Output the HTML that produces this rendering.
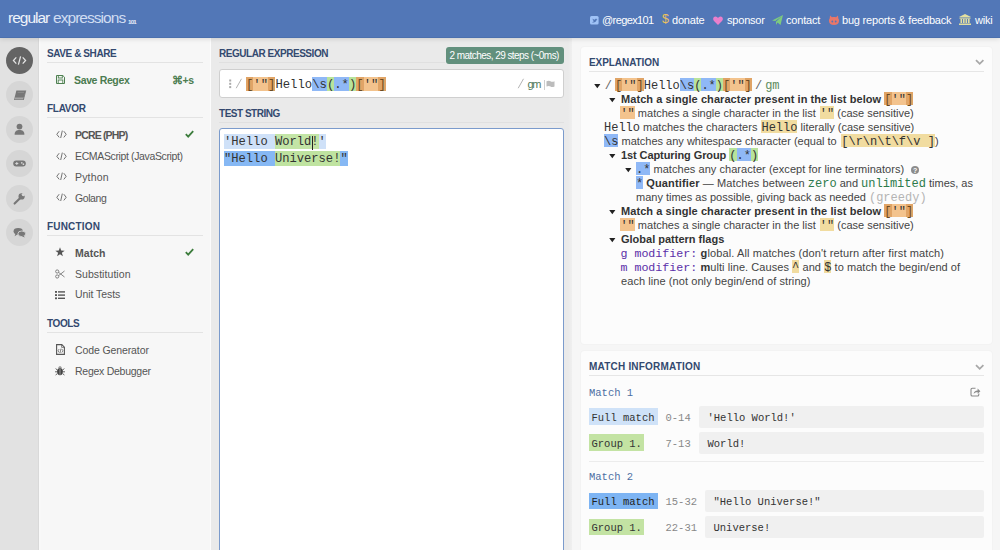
<!DOCTYPE html>
<html><head><meta charset="utf-8">
<style>
*{margin:0;padding:0;box-sizing:border-box}
html,body{width:1000px;height:550px;overflow:hidden;background:#f5f5f5;font-family:"Liberation Sans",sans-serif;color:#444}
.a{position:absolute;white-space:nowrap}
#hdr{position:absolute;left:0;top:0;width:1000px;height:38px;background:#5277b7;border-bottom:1px solid #4b70ae;box-shadow:0 1px 5px rgba(0,0,0,0.13);z-index:5}
#ibar{position:absolute;left:0;top:38px;width:38px;height:512px;background:#e2e2e2}
#side{position:absolute;left:38px;top:38px;width:172px;height:512px;background:linear-gradient(to right,#d9d9d9 0,#d9d9d9 1px,#fbfbfb 1px,#f7f7f7 3px)}
#center{position:absolute;left:210px;top:38px;width:362px;height:512px;background:linear-gradient(to right,#fcfcfc 0,#fcfcfc 1px,#eaeaea 1px,#eaeaea 358px,#efefef 362px)}
#right{position:absolute;left:572px;top:38px;width:428px;height:512px;background:#f6f6f6}
.circ{position:absolute;left:6px;width:27px;height:27px;border-radius:50%;background:#d6d6d6}
.circ svg{position:absolute;left:0;top:0}
.sh{font-weight:bold;font-size:10px;line-height:12px;color:#33496f;letter-spacing:-0.4px}
.hr{position:absolute;height:1px;background:#e3e3e3}
.si{font-size:10.5px;line-height:12px;color:#555;letter-spacing:-0.3px}
.mono{font-family:"Liberation Mono",monospace}
.hl{font-size:11px;line-height:12px;color:#fff;letter-spacing:-0.2px}
.ex{font-size:11px;line-height:16px;color:#444}
.exb{font-weight:bold}
.cc{background:#f3c38d}
.ccb{background:#e0a466;color:#6b4a22}
.blu{background:#8fb8f6}
.grn{background:#b8e39a}
.yel{background:#f1dca0}
.m{font-family:"Liberation Mono",monospace;font-size:12px;color:#333}
.hx{display:inline-block;height:12.7px;line-height:17.2px;vertical-align:baseline}
.ex b{font-weight:bold;color:#333}
.gr{color:#666}
.flg{color:#5b8a5b}
.zg{color:#2c7a4b}
.gy{color:#b4b4b4}
.pu{color:#5a2ea8;font-weight:normal;font-size:11.67px;letter-spacing:0}
.qm{display:inline-block;width:8.5px;height:8.5px;margin-left:3.5px;border-radius:50%;background:#8c8c8c;color:#fff;font-size:7px;line-height:9px;text-align:center;font-weight:bold;vertical-align:0.5px;letter-spacing:0}
.mi{font-family:"Liberation Mono",monospace;font-size:10.5px;line-height:12px}
.hr1{display:inline-block;height:14px;line-height:17.28px;vertical-align:baseline}
.ht{display:inline-block;height:15px;line-height:16.74px;vertical-align:top;white-space:pre}
</style></head><body>
<div id="hdr">
  <div class="a" style="left:8px;top:9px;font-size:15.5px;line-height:18px;color:#eef3fa;letter-spacing:-1px">regular</div>
  <div class="a" style="left:53px;top:9px;font-size:15.5px;line-height:18px;color:#d0ddf2;letter-spacing:-0.95px">expressions</div>
  <div class="a" style="left:128px;top:17.9px;font-size:6.2px;line-height:8px;color:#e6edf8;letter-spacing:-0.8px;font-weight:bold">101</div>
  <!-- links -->
  <svg class="a" style="left:590px;top:16px" width="9" height="9"><rect x="0" y="0" width="8.6" height="8.6" rx="1.5" fill="#9fc2f6"/><path d="M2 6.2c1.8 0.9 4.3 0.2 4.8-2.6l0.8-0.6-0.8 0.1c-0.5-0.8-1.8-0.5-1.8 0.6-1.2 0-2-0.6-2.6-1.2 0 0.6 0.2 1.2 0.7 1.5-0.6 0.1 0.3 0.9 0.9 1.1-0.5 0.5-1.2 0.8-2 1.1z" fill="#5277b7"/></svg>
  <div class="a hl" style="left:602px;top:13.7px;letter-spacing:-0.6px">@regex101</div>
  <div class="a" style="left:662px;top:12px;font-size:12.5px;line-height:14px;color:#ecc15e">$</div>
  <div class="a hl" style="left:672px;top:13.7px">donate</div>
  <svg class="a" style="left:713px;top:16px" width="10" height="9"><path d="M5 9L1 5C-0.5 3.5 0 0.5 2.5 0.5 3.7 0.5 4.5 1.3 5 2 5.5 1.3 6.3 0.5 7.5 0.5 10 0.5 10.5 3.5 9 5z" fill="#ea7fcc"/></svg>
  <div class="a hl" style="left:727px;top:13.7px">sponsor</div>
  <svg class="a" style="left:772px;top:15px" width="11" height="10"><path d="M0 5.5L11 0 8.5 10 5.5 7.5 4 10 4 6.8 9.5 1.5 3.3 6z" fill="#7ecb7e"/></svg>
  <div class="a hl" style="left:786px;top:13.7px">contact</div>
  <svg class="a" style="left:829px;top:15px" width="10" height="10"><path d="M1 0.5L3 2.2C4.2 1.8 5.8 1.8 7 2.2L9 0.5 9.3 3.5C10 4.3 10 5 10 6 10 8.5 8 10 5 10 2 10 0 8.5 0 6 0 5 0 4.3 0.7 3.5z" fill="#e8776a"/><circle cx="3.3" cy="6.5" r="0.9" fill="#5277b7"/><circle cx="6.7" cy="6.5" r="0.9" fill="#5277b7"/></svg>
  <div class="a hl" style="left:842px;top:13.7px">bug reports &amp; feedback</div>
  <svg class="a" style="left:959px;top:14px" width="12" height="11"><path d="M6 0L12 3 0 3z" fill="#e2dfa0"/><rect x="0.5" y="3.5" width="11" height="1.2" fill="#e2dfa0"/><rect x="1.5" y="5" width="1.6" height="4" fill="#e2dfa0"/><rect x="4" y="5" width="1.6" height="4" fill="#e2dfa0"/><rect x="6.5" y="5" width="1.6" height="4" fill="#e2dfa0"/><rect x="9" y="5" width="1.6" height="4" fill="#e2dfa0"/><rect x="0" y="9.5" width="12" height="1.5" fill="#e2dfa0"/></svg>
  <div class="a hl" style="left:975px;top:13.7px">wiki</div>
</div>

<div id="ibar">
  <div class="circ" style="top:8.5px;background:#646464"><svg width="27" height="27"><path d="M10.3 10.3L7.4 13.5 10.3 16.7M16.7 10.3L19.6 13.5 16.7 16.7M14.6 9.3L12.4 17.7" stroke="#e6e6e6" stroke-width="1.25" fill="none"/></svg></div>
  <div class="circ" style="top:43px"><svg width="27" height="27"><path d="M10.4 9.6H19.8L18 16.6H8.6z" fill="#777"/><path d="M8.6 16.6H18L17.4 19H8z" fill="#777"/><path d="M8.9 17.8H17.1" stroke="#dadada" stroke-width="0.7"/><path d="M11.6 11.4H18" stroke="#9a9a9a" stroke-width="0.6"/><path d="M19.8 9.6L18 16.6 17.4 19" stroke="#777" stroke-width="0.8" fill="none"/></svg></div>
  <div class="circ" style="top:78px"><svg width="27" height="27"><circle cx="13.5" cy="10.6" r="2.9" fill="#777"/><path d="M8.6 18.8C8.6 15.2 10.6 14.1 13.5 14.1S18.4 15.2 18.4 18.8z" fill="#777"/></svg></div>
  <div class="circ" style="top:112px"><svg width="27" height="27"><rect x="7.2" y="10.6" width="12.6" height="5.8" rx="2.9" fill="#777"/><path d="M9.3 13.5H12.3M10.8 12V15" stroke="#d6d6d6" stroke-width="1"/><circle cx="15.8" cy="12.8" r="0.85" fill="#d6d6d6"/><circle cx="17.4" cy="14.2" r="0.85" fill="#d6d6d6"/></svg></div>
  <div class="circ" style="top:146.5px"><svg width="27" height="27"><path d="M8.6 18.6L14 13.2" stroke="#777" stroke-width="2.1" stroke-linecap="round"/><circle cx="15.6" cy="11.4" r="3.1" fill="#777"/><circle cx="17.4" cy="9.6" r="1.7" fill="#d6d6d6"/></svg></div>
  <div class="circ" style="top:181px"><svg width="27" height="27"><ellipse cx="12.2" cy="12.3" rx="4.6" ry="3.3" fill="#777"/><path d="M9.5 14.6L8.6 17.2 11.6 15.3z" fill="#777"/><ellipse cx="15.8" cy="14.8" rx="3.9" ry="2.8" fill="#777" stroke="#d6d6d6" stroke-width="0.9"/><path d="M17.6 16.6L18.8 18.6 15.8 17.2z" fill="#777"/></svg></div>
</div>

<div id="side">
  <div class="a sh" style="left:9px;top:9.6px;letter-spacing:-0.418px">SAVE &amp; SHARE</div>
  <div class="hr" style="left:9px;top:24px;width:156px"></div>
  <svg class="a" style="left:18px;top:37px" width="9" height="9"><path d="M0.5 0.5H6.8L8.5 2.2V8.5H0.5z" fill="none" stroke="#4e8050" stroke-width="1"/><rect x="2.3" y="0.5" width="4" height="2.5" fill="none" stroke="#4e8050" stroke-width="0.9"/><rect x="2.2" y="5" width="4.6" height="3.5" fill="none" stroke="#4e8050" stroke-width="0.9"/></svg>
  <div class="a si" style="left:36px;top:36.07px;font-weight:bold;color:#4b7c50;letter-spacing:-0.356px">Save Regex</div>
  <div class="a si" style="left:134px;top:35.9px;font-weight:bold;color:#4b7c50;letter-spacing:-0.4px">&#8984;+s</div>

  <div class="a sh" style="left:9px;top:65.4px;letter-spacing:-0.28px">FLAVOR</div>
  <div class="hr" style="left:9px;top:79px;width:156px"></div>
  <svg class="a" style="left:17.5px;top:92.3px" width="11" height="9"><path d="M3.2 1.2L0.8 4.3 3.2 7.4M7.8 1.2L10.2 4.3 7.8 7.4M6.3 0.6L4.7 8" stroke="#6a6a6a" stroke-width="0.95" fill="none"/></svg>
  <div class="a si" style="left:37px;top:90.77px;font-weight:bold;letter-spacing:-0.833px">PCRE (PHP)</div>
  <svg class="a" style="left:147px;top:92px" width="9" height="8"><path d="M0.8 4.2L3.2 6.6 8.2 1.2" stroke="#3d7d3d" stroke-width="1.8" fill="none"/></svg>
  <svg class="a" style="left:17.5px;top:113.5px" width="11" height="9"><path d="M3.2 1.2L0.8 4.3 3.2 7.4M7.8 1.2L10.2 4.3 7.8 7.4M6.3 0.6L4.7 8" stroke="#6a6a6a" stroke-width="0.95" fill="none"/></svg>
  <div class="a si" style="left:37px;top:111.97px;letter-spacing:-0.364px">ECMAScript (JavaScript)</div>
  <svg class="a" style="left:17.5px;top:134.3px" width="11" height="9"><path d="M3.2 1.2L0.8 4.3 3.2 7.4M7.8 1.2L10.2 4.3 7.8 7.4M6.3 0.6L4.7 8" stroke="#6a6a6a" stroke-width="0.95" fill="none"/></svg>
  <div class="a si" style="left:37px;top:132.77px;letter-spacing:0.16px">Python</div>
  <svg class="a" style="left:17.5px;top:155.2px" width="11" height="9"><path d="M3.2 1.2L0.8 4.3 3.2 7.4M7.8 1.2L10.2 4.3 7.8 7.4M6.3 0.6L4.7 8" stroke="#6a6a6a" stroke-width="0.95" fill="none"/></svg>
  <div class="a si" style="left:37px;top:153.67px;letter-spacing:-0.42px">Golang</div>

  <div class="a sh" style="left:9px;top:183.4px;letter-spacing:0.171px">FUNCTION</div>
  <div class="hr" style="left:9px;top:197px;width:156px"></div>
  <svg class="a" style="left:17px;top:209px" width="10" height="10"><path d="M5 0.3L6.2 3.6 9.7 3.7 6.9 5.8 7.9 9.3 5 7.3 2.1 9.3 3.1 5.8 0.3 3.7 3.8 3.6z" fill="#555"/></svg>
  <div class="a si" style="left:37px;top:208.77px;font-weight:bold;letter-spacing:0.05px">Match</div>
  <svg class="a" style="left:147px;top:210px" width="9" height="8"><path d="M0.8 4.2L3.2 6.6 8.2 1.2" stroke="#3d7d3d" stroke-width="1.8" fill="none"/></svg>
  <svg class="a" style="left:17px;top:231px" width="10" height="10"><circle cx="2.2" cy="2.5" r="1.6" fill="none" stroke="#777" stroke-width="0.9"/><circle cx="2.2" cy="7.5" r="1.6" fill="none" stroke="#777" stroke-width="0.9"/><path d="M3.5 3.3L9.5 8M3.5 6.7L9.5 2" stroke="#777" stroke-width="0.9"/></svg>
  <div class="a si" style="left:37px;top:229.67px;letter-spacing:0.055px">Substitution</div>
  <svg class="a" style="left:17px;top:252px" width="10" height="10"><rect x="0" y="1" width="2" height="1.8" fill="#555"/><rect x="0" y="4.2" width="2" height="1.8" fill="#555"/><rect x="0" y="7.4" width="2" height="1.8" fill="#555"/><rect x="3" y="1.2" width="7" height="1.4" fill="#555"/><rect x="3" y="4.4" width="7" height="1.4" fill="#555"/><rect x="3" y="7.6" width="7" height="1.4" fill="#555"/></svg>
  <div class="a si" style="left:37px;top:250.47px;letter-spacing:-0.067px">Unit Tests</div>

  <div class="a sh" style="left:9px;top:280.0px;letter-spacing:-0.4px">TOOLS</div>
  <div class="hr" style="left:9px;top:294px;width:156px"></div>
  <svg class="a" style="left:18px;top:305.5px" width="9" height="11"><path d="M0.6 0.6H5.8L8.4 3.2V10.4H0.6z" fill="none" stroke="#555" stroke-width="1.1"/><path d="M5.6 0.8V3.4H8.2" fill="none" stroke="#555" stroke-width="0.7"/><path d="M3.2 5L2 6.8 3.2 8.6M5.8 5L7 6.8 5.8 8.6M5 4.6L4 9" stroke="#666" stroke-width="0.8" fill="none"/></svg>
  <div class="a si" style="left:37px;top:305.77px;letter-spacing:-0.108px">Code Generator</div>
  <svg class="a" style="left:17px;top:327px" width="10" height="11"><ellipse cx="5" cy="6.6" rx="2.9" ry="3.6" fill="#444"/><path d="M3 2.6Q5 0.6 7 2.6z" fill="#444"/><path d="M5 3.4V10.2" stroke="#d0d0d0" stroke-width="0.6"/><path d="M0.6 3.6L2.4 5M9.4 3.6L7.6 5M0 6.8H2.2M10 6.8H7.8M0.6 10L2.4 8.6M9.4 10L7.6 8.6" stroke="#555" stroke-width="0.9"/></svg>
  <div class="a si" style="left:37px;top:326.77px;letter-spacing:-0.262px">Regex Debugger</div>
</div>

<div id="center">
  <div class="a sh" style="left:9px;top:10.2px;letter-spacing:-0.459px">REGULAR EXPRESSION</div>
  <div class="hr" style="left:9px;top:24px;width:226px;background:#e0e0e0"></div>
  <div class="a" style="left:236px;top:8.9px;width:118px;height:17px;background:#62907d;border-radius:3px"></div>
  <div class="a hl" style="left:239.5px;top:12.4px;font-size:10px;line-height:12px;letter-spacing:-0.55px">2 matches, 29 steps (~0ms)</div>
  <div class="a" style="left:9px;top:31px;width:345px;height:29px;background:#fff;border:1px solid #cfcfcf;border-radius:3px"></div>
  <svg class="a" style="left:18.5px;top:41px" width="3" height="10"><rect x="0.2" y="0.5" width="2" height="2" fill="#aaa"/><rect x="0.2" y="3.8" width="2" height="2" fill="#aaa"/><rect x="0.2" y="7.1" width="2" height="2" fill="#aaa"/></svg>
  <svg class="a" style="left:25px;top:40px" width="8" height="11"><path d="M6.5 0.8L1.2 10.2" stroke="#aaa" stroke-width="0.9"/></svg>
  <div class="a mono" style="left:36px;top:38.8px;font-size:12.25px;line-height:14px;color:#333"><span class="hr1 ccb">[</span><span class="hr1 cc">'"</span><span class="hr1 ccb">]</span>Hello<span class="hr1 blu">\s</span><span class="hr1 grn">(</span><span class="hr1 blu">.*</span><span class="hr1 grn">)</span><span class="hr1 ccb">[</span><span class="hr1 cc">'"</span><span class="hr1 ccb">]</span></div>
  <svg class="a" style="left:307px;top:40px" width="8" height="11"><path d="M6.5 0.8L1.2 10.2" stroke="#aaa" stroke-width="0.9"/></svg>
  <div class="a" style="left:317.5px;top:39.3px;font-size:11px;line-height:14px;color:#4f7a5a;letter-spacing:-1.4px">gm</div>
  <svg class="a" style="left:333.5px;top:41.5px" width="11" height="10"><rect x="0" y="0" width="0.8" height="10" fill="#c4c4c4"/><path d="M2.5 1.3Q5 0.3 6.5 1.3T10.5 1.3V6.5Q8 7.5 6.5 6.5T2.5 6.5z" fill="#bcbcbc"/></svg>

  <div class="a sh" style="left:9px;top:69.6px;letter-spacing:-0.48px">TEST STRING</div>
  <div class="hr" style="left:9px;top:84px;width:345px;background:#e0e0e0"></div>
  <div class="a" style="left:9px;top:90px;width:345px;height:440px;background:#fff;border:1px solid #7b9bcc;border-radius:3px"></div>
  <div class="a mono" style="left:14px;top:96px;font-size:12.13px;line-height:17.1px;color:#333"><span class="ht" style="background:#cfe1f8">'Hello </span><span class="ht" style="background:#c3e5a6">World</span><span class="ht" style="background:#c3e5a6;position:relative">!<span style="position:absolute;left:0.5px;top:2px;width:1px;height:14px;background:#222"></span></span><span class="ht" style="background:#cfe1f8">'</span><br><span class="ht" style="background:#86b8f4">"Hello </span><span class="ht" style="background:#bfe3a0">Universe!</span><span class="ht" style="background:#86b8f4">"</span></div>
</div>

<div id="right">
  <div class="a" style="left:9px;top:9px;width:411px;height:296.5px;background:#fcfcfc;border-radius:3px;box-shadow:0 0 1.5px rgba(0,0,0,0.07)"></div>
  <div class="a sh" style="left:17px;top:19px;letter-spacing:-0.07px">EXPLANATION</div>
  <svg class="a" style="left:403px;top:21px" width="10" height="7"><path d="M1 1.2L4.7 4.8 8.4 1.2" stroke="#a8a8a8" stroke-width="1.8" fill="none"/></svg>
  <div class="hr" style="left:17px;top:33px;width:395px;background:#e6e6e6"></div>
  <svg class="a" style="left:21.8px;top:45.8px" width="7" height="5"><path d="M0.2 0H6.4L3.3 4.2z" fill="#222"/></svg>
  <div class="a ex" style="left:32.7px;top:38.99px;"><span class="m gr">/</span> <span class="m"><span class="hx ccb">[</span><span class="hx cc">'"</span><span class="hx ccb">]</span>Hello<span class="hx blu">\s</span><span class="hx grn">(</span><span class="hx blu">.*</span><span class="hx grn">)</span><span class="hx ccb">[</span><span class="hx cc">'"</span><span class="hx ccb">]</span></span> <span class="m gr">/</span> <span class="m flg">gm</span></div>
  <svg class="a" style="left:37.3px;top:59.82px" width="7" height="5"><path d="M0.2 0H6.4L3.3 4.2z" fill="#222"/></svg>
  <div class="a ex" style="left:49px;top:53.01px;"><b style="letter-spacing:0.07px">Match a single character present in the list below</b> <span class="m"><span class="hx ccb">[</span><span class="hx cc">'"</span><span class="hx ccb">]</span></span></div>
  <div class="a ex" style="left:48.4px;top:67.03px;"><span class="m"><span class="hx cc">'"</span></span> matches a single character in the list <span class="m" style="margin-left:1px"><span class="hx yel">'"</span></span> (case sensitive)</div>
  <div class="a ex" style="left:32px;top:81.05px;"><span class="m">Hello</span> matches the characters <span class="m" style="margin-left:1px"><span class="hx yel">Hello</span></span> literally (case sensitive)</div>
  <div class="a ex" style="left:32px;top:95.07px;"><span class="m"><span class="hx blu">\s</span></span> matches any whitespace character (equal to <span class="m" style="margin-left:1.5px"><span class="hx yel">[\r\n\t\f\v ]</span></span>)</div>
  <svg class="a" style="left:37.3px;top:115.9px" width="7" height="5"><path d="M0.2 0H6.4L3.3 4.2z" fill="#222"/></svg>
  <div class="a ex" style="left:49px;top:109.09px;"><b style="letter-spacing:-0.09px">1st Capturing Group</b> <span class="m"><span class="hx grn">(</span><span class="hx blu">.*</span><span class="hx grn">)</span></span></div>
  <svg class="a" style="left:53.3px;top:129.92px" width="7" height="5"><path d="M0.2 0H6.4L3.3 4.2z" fill="#222"/></svg>
  <div class="a ex" style="left:64px;top:123.11px;"><span class="m"><span class="hx blu">.*</span></span> <span style="letter-spacing:0.05px">matches any character (except for line terminators)</span> <span class="qm">?</span></div>
  <div class="a ex" style="left:64px;top:137.13px;"><span class="m"><span class="hx blu">*</span></span> <b style="letter-spacing:0.15px">Quantifier</b> <span style="letter-spacing:0.1px">— Matches between</span> <span class="m zg">zero</span> and <span class="m zg">unlimited</span> times, as</div>
  <div class="a ex" style="left:64px;top:151.15px;">many times as possible, giving back as needed <span class="m gy">(greedy)</span></div>
  <svg class="a" style="left:37.3px;top:171.98px" width="7" height="5"><path d="M0.2 0H6.4L3.3 4.2z" fill="#222"/></svg>
  <div class="a ex" style="left:49px;top:165.17px;"><b style="letter-spacing:0.07px">Match a single character present in the list below</b> <span class="m"><span class="hx ccb">[</span><span class="hx cc">'"</span><span class="hx ccb">]</span></span></div>
  <div class="a ex" style="left:48.4px;top:179.19px;"><span class="m"><span class="hx cc">'"</span></span> matches a single character in the list <span class="m" style="margin-left:1px"><span class="hx yel">'"</span></span> (case sensitive)</div>
  <svg class="a" style="left:37.3px;top:200.02px" width="7" height="5"><path d="M0.2 0H6.4L3.3 4.2z" fill="#222"/></svg>
  <div class="a ex" style="left:49px;top:193.21px;"><b>Global pattern flags</b></div>
  <div class="a ex" style="left:48.4px;top:207.23px;letter-spacing:0.13px"><span class="m pu">g modifier:</span> <b>g</b>lobal. All matches (don't return after first match)</div>
  <div class="a ex" style="left:48.4px;top:221.25px;letter-spacing:0.06px"><span class="m pu">m modifier:</span> <b>m</b>ulti line. Causes <span class="m"><span class="hx yel">^</span></span> and <span class="m"><span class="hx yel">$</span></span> to match the begin/end of</div>
  <div class="a ex" style="left:49px;top:235.27px;letter-spacing:0.075px">each line (not only begin/end of string)</div>

  <div class="a" style="left:9px;top:313px;width:411px;height:240px;background:#fcfcfc;border-radius:3px;box-shadow:0 0 1.5px rgba(0,0,0,0.07)"></div>
  <div class="a sh" style="left:17px;top:322.6px;letter-spacing:0.206px">MATCH INFORMATION</div>
  <svg class="a" style="left:403px;top:325.5px" width="10" height="7"><path d="M1 1.2L4.7 4.8 8.4 1.2" stroke="#a8a8a8" stroke-width="1.8" fill="none"/></svg>
  <div class="hr" style="left:17px;top:337px;width:395px;background:#e6e6e6"></div>
  <div class="a mi" style="left:17px;top:349.0px;color:#4d6fa3">Match 1</div>
  <svg class="a" style="left:398px;top:349px" width="11" height="10"><path d="M5.5 1.2H2.3Q1 1.2 1 2.5V7.7Q1 9 2.3 9H7.5Q8.8 9 8.8 7.7V6.5" fill="none" stroke="#8a8a8a" stroke-width="1.1"/><path d="M3.6 6.8Q4 3.6 7.6 3.4V1.6L10.4 4.2 7.6 6.8V5.1Q5.3 5.1 3.6 6.8z" fill="#8a8a8a"/></svg>
  <div class="a" style="left:17px;top:370px;width:69px;height:17px;background:#cfe2f8"></div>
  <div class="a mi" style="left:19.5px;top:374.0px;color:#333">Full match</div>
  <div class="a mi" style="left:93.5px;top:374.0px;color:#888">0-14</div>
  <div class="a" style="left:127px;top:368px;width:285px;height:22px;background:#f0f0f0;border-radius:2px"></div>
  <div class="a mi" style="left:135.5px;top:374.0px;color:#333">'Hello World!'</div>
  <div class="a" style="left:17px;top:396px;width:55px;height:17px;background:#c3e3a3"></div>
  <div class="a mi" style="left:19.5px;top:400.0px;color:#333">Group 1.</div>
  <div class="a mi" style="left:93.5px;top:400.0px;color:#888">7-13</div>
  <div class="a" style="left:127px;top:394px;width:285px;height:22px;background:#f0f0f0;border-radius:2px"></div>
  <div class="a mi" style="left:135.5px;top:400.0px;color:#333">World!</div>
  <div class="hr" style="left:17px;top:423px;width:395px;background:#ececec"></div>
  <div class="a mi" style="left:17px;top:433.0px;color:#4d6fa3">Match 2</div>
  <div class="a" style="left:17px;top:455px;width:69px;height:16px;background:#7db4f3"></div>
  <div class="a mi" style="left:19.5px;top:458.0px;color:#222">Full match</div>
  <div class="a mi" style="left:93.5px;top:458.0px;color:#888">15-32</div>
  <div class="a" style="left:133px;top:452px;width:279px;height:22px;background:#f0f0f0;border-radius:2px"></div>
  <div class="a mi" style="left:141.5px;top:458.0px;color:#333">"Hello Universe!"</div>
  <div class="a" style="left:17px;top:481px;width:55px;height:16px;background:#c3e3a3"></div>
  <div class="a mi" style="left:19.5px;top:484.0px;color:#333">Group 1.</div>
  <div class="a mi" style="left:93.5px;top:484.0px;color:#888">22-31</div>
  <div class="a" style="left:133px;top:478px;width:279px;height:22px;background:#f0f0f0;border-radius:2px"></div>
  <div class="a mi" style="left:141.5px;top:484.0px;color:#333">Universe!</div>
</div>
</body></html>
